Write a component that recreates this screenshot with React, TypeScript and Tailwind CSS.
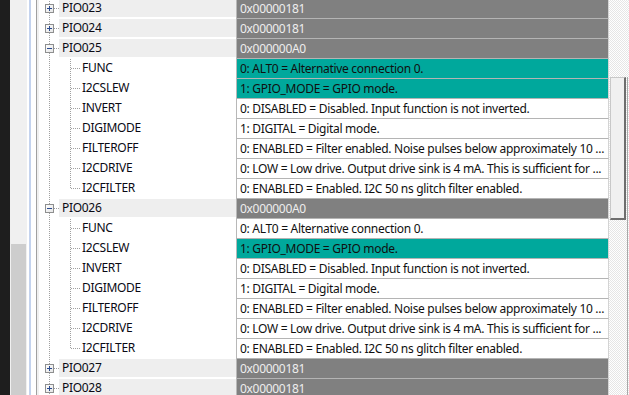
import React from "react";

type Row =
  | { kind: "parent"; name: string; value: string; expanded: boolean }
  | { kind: "child"; name: string; value: string; teal?: boolean; last?: boolean };

const childrenA = (tealFunc: boolean): Row[] => [
  { kind: "child", name: "FUNC", value: "0: ALT0 = Alternative connection 0.", teal: tealFunc },
  { kind: "child", name: "I2CSLEW", value: "1: GPIO_MODE = GPIO mode.", teal: true },
  { kind: "child", name: "INVERT", value: "0: DISABLED = Disabled. Input function is not inverted." },
  { kind: "child", name: "DIGIMODE", value: "1: DIGITAL = Digital mode." },
  { kind: "child", name: "FILTEROFF", value: "0: ENABLED = Filter enabled. Noise pulses below approximately 10 ..." },
  { kind: "child", name: "I2CDRIVE", value: "0: LOW = Low drive. Output drive sink is 4 mA. This is sufficient for ..." },
  { kind: "child", name: "I2CFILTER", value: "0: ENABLED = Enabled. I2C 50 ns glitch filter enabled.", last: true },
];

const rows: Row[] = [
  { kind: "parent", name: "PIO023", value: "0x00000181", expanded: false },
  { kind: "parent", name: "PIO024", value: "0x00000181", expanded: false },
  { kind: "parent", name: "PIO025", value: "0x000000A0", expanded: true },
  ...childrenA(true),
  { kind: "parent", name: "PIO026", value: "0x000000A0", expanded: true },
  ...childrenA(false),
  { kind: "parent", name: "PIO027", value: "0x00000181", expanded: false },
  { kind: "parent", name: "PIO028", value: "0x00000181", expanded: false },
];

const DOT = "#a0a0a0";

function ParentGutter({ expanded }: { expanded: boolean }) {
  return (
    <svg width="20" height="20" className="shrink-0 block">
      <line x1="10.5" y1="0" x2="10.5" y2="5" stroke={DOT} strokeDasharray="1 1" />
      <line x1="10.5" y1="14" x2="10.5" y2="20" stroke={DOT} strokeDasharray="1 1" />
      <line x1="15" y1="9.5" x2="20" y2="9.5" stroke={DOT} strokeDasharray="1 1" />
      <defs>
        <linearGradient id="bx" x1="0" y1="0" x2="1" y2="1">
          <stop offset="0" stopColor="#ffffff" />
          <stop offset="1" stopColor="#e4e4e4" />
        </linearGradient>
      </defs>
      <rect x="6.5" y="5.5" width="8" height="8" fill="url(#bx)" stroke="#8e8f8f" />
      <line x1="8" y1="9.5" x2="13" y2="9.5" stroke="#2a4a8f" />
      {!expanded && <line x1="10.5" y1="7" x2="10.5" y2="12" stroke="#2a4a8f" />}
    </svg>
  );
}

function ChildGutter({ last }: { last?: boolean }) {
  return (
    <>
      <svg width="20" height="20" className="shrink-0 block">
        <line x1="10.5" y1="0" x2="10.5" y2="20" stroke={DOT} strokeDasharray="1 1" />
      </svg>
      <svg width="23" height="20" className="shrink-0 block">
        <line x1="11.5" y1="0" x2="11.5" y2={last ? 10 : 20} stroke={DOT} strokeDasharray="1 1" />
        <line x1="12" y1="9.5" x2="22" y2="9.5" stroke={DOT} strokeDasharray="1 1" />
      </svg>
    </>
  );
}

function TreeRow({ row }: { row: Row }) {
  const valueCls =
    row.kind === "parent"
      ? "bg-[#808080] text-[#eeeeee]"
      : row.teal
      ? "bg-[#00a89c] text-[#101010]"
      : "bg-white text-[#101010]";
  return (
    <div className="flex h-[20px] shrink-0">
      <div className="w-[197px] flex items-stretch bg-white">
        {row.kind === "parent" ? (
          <>
            <ParentGutter expanded={row.expanded} />
            <div className="flex-1 bg-[#eeeeee] border-b-2 border-white pl-[3px] flex items-center text-[#0a0a14] leading-none">
              {row.name}
            </div>
          </>
        ) : (
          <>
            <ChildGutter last={row.last} />
            <div className="flex-1 pb-[2px] flex items-center text-[#0a0a14] leading-none">{row.name}</div>
          </>
        )}
      </div>
      <div
        className={`w-[373px] border-l border-b border-l-[#b8b8b8] border-b-[#b4b4b4] border-r border-r-[#d4d4d4] pl-[3px] flex items-center whitespace-nowrap overflow-hidden leading-none ${valueCls}`}
      >
        {row.value}
      </div>
    </div>
  );
}

export default function App() {
  return (
    <div
      className="w-[629px] h-[395px] overflow-hidden flex bg-white text-[12px] tracking-[-0.3px]"
      style={{ fontFamily: "'Noto Sans', 'Open Sans', sans-serif" }}
    >
      <div className="w-[10px] shrink-0 bg-[#1e1e1e]" />
      <div className="w-[17px] shrink-0 bg-[#f0f0f0] pt-[244px] pl-[1px]">
        <div className="w-[15px] h-full bg-[#cdcdcd]" />
      </div>
      <div className="w-[2px] shrink-0 bg-white" />
      <div className="w-[2px] shrink-0 bg-[#c4d3ee]" />
      <div className="w-[5px] shrink-0 bg-white" />
      <div className="w-[1px] shrink-0 bg-[#a0a0a0]" />
      <div className="w-[2px] shrink-0 bg-[#f0f0f0]" />
      <div className="w-[570px] shrink-0 flex flex-col mt-[-1px]">
        {rows.map((r, i) => (
          <TreeRow key={i} row={r} />
        ))}
      </div>
      <div className="w-[20px] shrink-0 flex bg-[repeating-conic-gradient(#e6e6e6_0%_25%,#ffffff_0%_50%)] bg-[length:2px_2px]">
        <div className="w-[16px] ml-[1px] flex flex-col">
          <div className="h-[77px]" />
          <div className="h-[143px] bg-[#f0f0f0] border-t border-l border-[#c8c8c8] border-r-2 border-b-2 border-r-[#6e6e6e] border-b-[#6e6e6e]" />
        </div>
        <div className="flex-1 flex">
          <div className="w-[1px]" />
          <div className="w-[1px] mt-[77px] bg-[#a8a8a8]" />
        </div>
      </div>
    </div>
  );
}
